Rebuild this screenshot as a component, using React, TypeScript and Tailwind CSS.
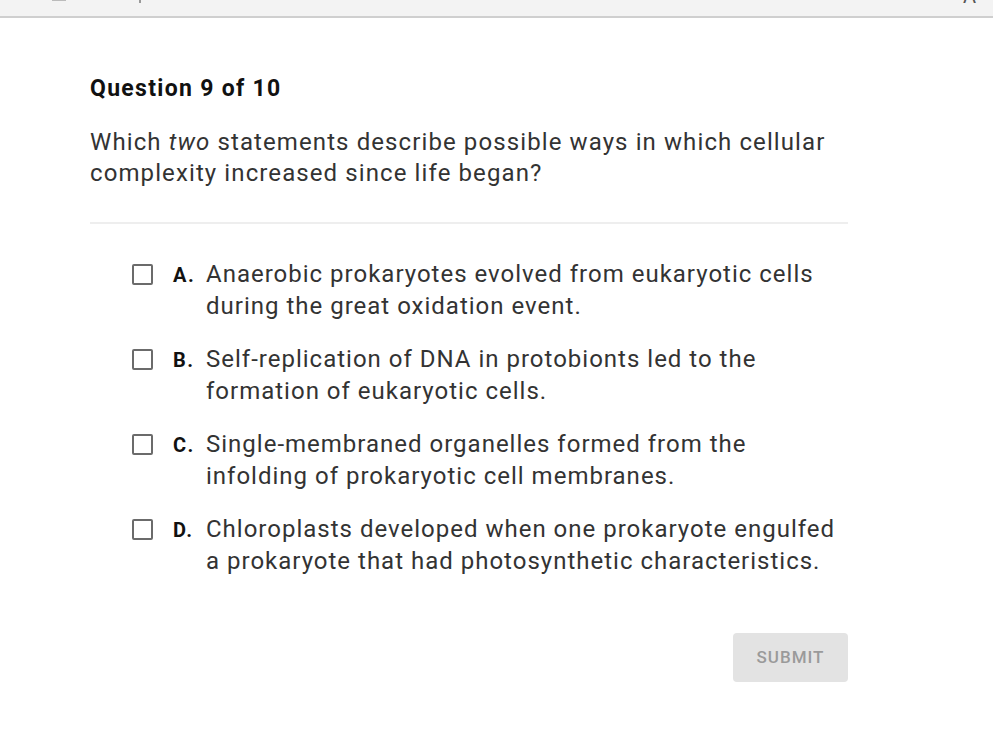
import React, { useState } from 'react';

const options = [
  { letter: 'A.', text: ['Anaerobic prokaryotes evolved from eukaryotic cells', 'during the great oxidation event.'] },
  { letter: 'B.', text: ['Self-replication of DNA in protobionts led to the', 'formation of eukaryotic cells.'] },
  { letter: 'C.', text: ['Single-membraned organelles formed from the', 'infolding of prokaryotic cell membranes.'] },
  { letter: 'D.', text: ['Chloroplasts developed when one prokaryote engulfed', 'a prokaryote that had photosynthetic characteristics.'] },
];

const App: React.FC = () => {
  const [checked, setChecked] = useState<boolean[]>([false, false, false, false]);

  const toggle = (i: number) => {
    setChecked(checked.map((c, j) => (j === i ? !c : c)));
  };

  return (
    <div className="min-h-screen bg-white font-['Roboto','Liberation_Sans',sans-serif] text-[#333]">
      {/* Browser strip, cut off at the top */}
      <div className="h-[18px] bg-[#f3f3f3] border-b-2 border-[#cfcfcf] relative overflow-hidden">
        <div className="absolute left-[52px] top-0 w-[14px] h-[1px] bg-[#bbb]" />
        <div className="absolute left-[139px] top-0 w-[2px] h-[3px] bg-[#999]" />
        <div className="absolute left-[963px] top-[-14px] text-[20px] text-[#555] leading-none">A</div>
      </div>

      <div className="w-[758px] ml-[90px]">
        <h2 className="mt-[58px] text-[23px] font-bold text-[#111] leading-[26px] tracking-[1.3px]">Question 9 of 10</h2>
        <p className="mt-[25px] text-[24px] leading-[31px] text-[#333] tracking-[1.1px]">
          Which <i>two</i> statements describe possible ways in which cellular
          <br />
          complexity increased since life began?
        </p>
        <div className="mt-[33px] h-[2px] bg-[#eeeeee]" />

        <div className="mt-[34px] ml-[42px] flex flex-col gap-[21px]">
          {options.map((o, i) => (
            <div key={o.letter} className="flex items-start cursor-pointer" onClick={() => toggle(i)}>
              <div
                className={`mt-[6px] w-[21px] h-[21px] border-2 rounded-[2px] flex items-center justify-center shrink-0 ${
                  checked[i] ? 'border-[#1a73e8] bg-[#1a73e8]' : 'border-[#6b6b6b] bg-white'
                }`}
              >
                {checked[i] && (
                  <svg viewBox="0 0 24 24" className="w-[14px] h-[14px]" fill="none" stroke="white" strokeWidth={3}>
                    <path d="M5 13l4 4L19 7" />
                  </svg>
                )}
              </div>
              <span className="ml-[20px] w-[33px] shrink-0 text-[20px] font-bold text-[#111] leading-[32px] mt-[1px] tracking-[1.5px]">
                {o.letter}
              </span>
              <div className="text-[24px] leading-[32px] text-[#333] tracking-[1px] whitespace-nowrap">
                {o.text[0]}
                <br />
                {o.text[1]}
              </div>
            </div>
          ))}
        </div>

        <div className="mt-[56px] flex justify-end">
          <button className="w-[115px] h-[49px] rounded-[4px] bg-[#e3e3e3] text-[#9a9a9a] text-[17px] font-medium tracking-[1px]">
            SUBMIT
          </button>
        </div>
      </div>
    </div>
  );
};

export default App;
